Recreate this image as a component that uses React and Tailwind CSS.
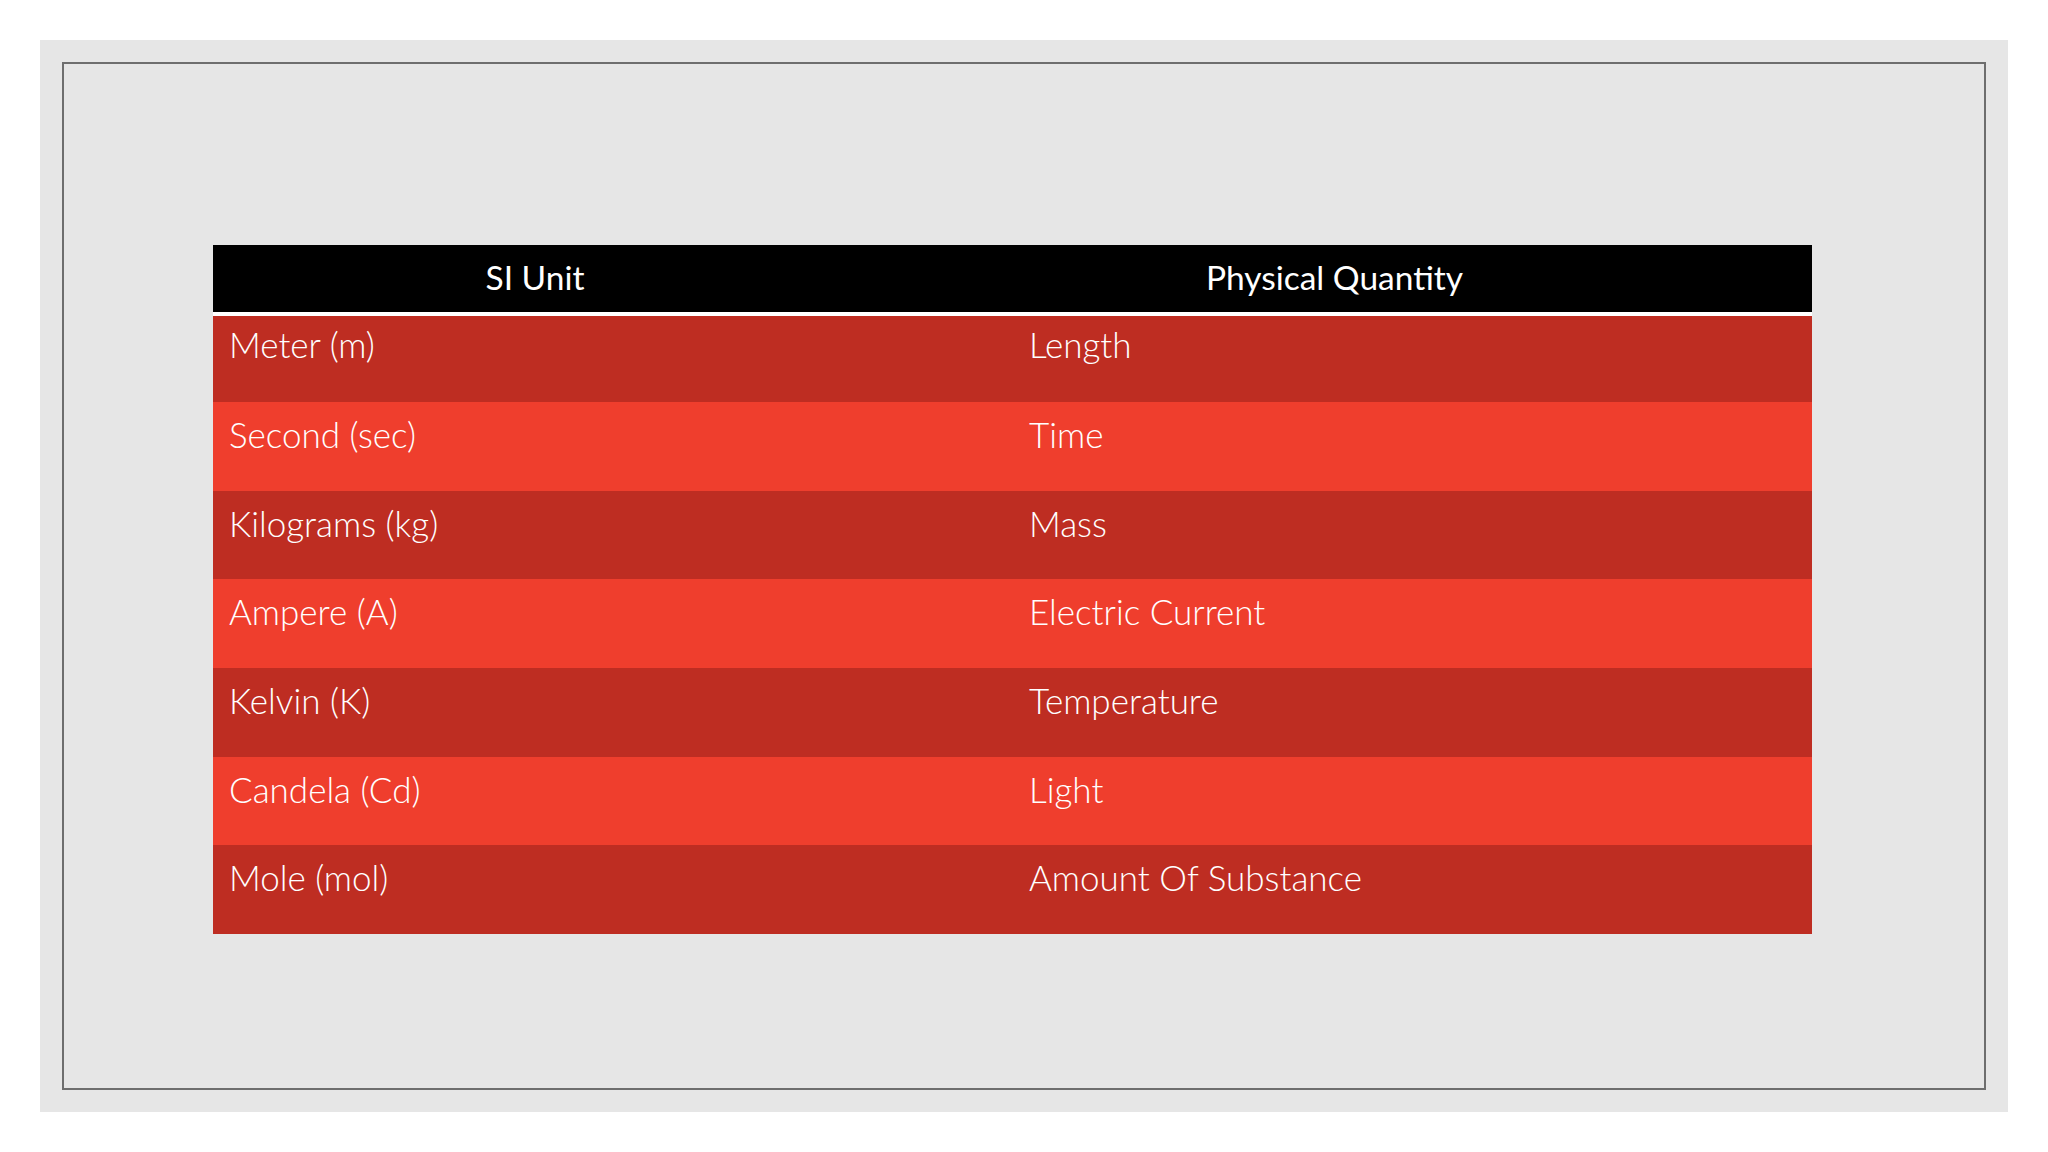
import React from "react";

const rows = [
  ["Meter (m)", "Length"],
  ["Second (sec)", "Time"],
  ["Kilograms (kg)", "Mass"],
  ["Ampere (A)", "Electric Current"],
  ["Kelvin (K)", "Temperature"],
  ["Candela (Cd)", "Light"],
  ["Mole (mol)", "Amount Of Substance"],
];

export default function App() {
  return (
    <div
      className="w-[2048px] h-[1152px] bg-white p-[40px]"
      style={{ fontFamily: "Lato, 'Open Sans', sans-serif" }}
    >
      <div className="h-full bg-[#e6e6e6] p-[22px]">
        <div className="h-full border-2 border-[#6e6e6e] pl-[149px] pt-[181px]">
          <div className="w-[1599px] flex flex-col">
            <div className="flex h-[67px] bg-black text-white">
              <div className="w-[800px] pr-[156px] flex items-center justify-center text-[33.5px] pb-[2px]">
                SI Unit
              </div>
              <div className="w-[799px] pr-[156px] flex items-center justify-center text-[33.5px] pb-[2px]">
                Physical Quantity
              </div>
            </div>
            {rows.map(([a, b], i) => (
              <div
                key={i}
                className={
                  "flex text-white font-light text-[35px] leading-none " +
                  (i === 0 ? "h-[90px] border-t-4 border-white " : "h-[88.7px] ") +
                  (i % 2 === 0 ? "bg-[#be2d22]" : "bg-[#ef3e2d]")
                }
              >
                <div className={"w-[800px] pl-[16px] " + (i === 0 ? "pt-[11px]" : "pt-[15px]")}>{a}</div>
                <div className={"w-[799px] pl-[16px] " + (i === 0 ? "pt-[11px]" : "pt-[15px]")}>{b}</div>
              </div>
            ))}
          </div>
        </div>
      </div>
    </div>
  );
}
